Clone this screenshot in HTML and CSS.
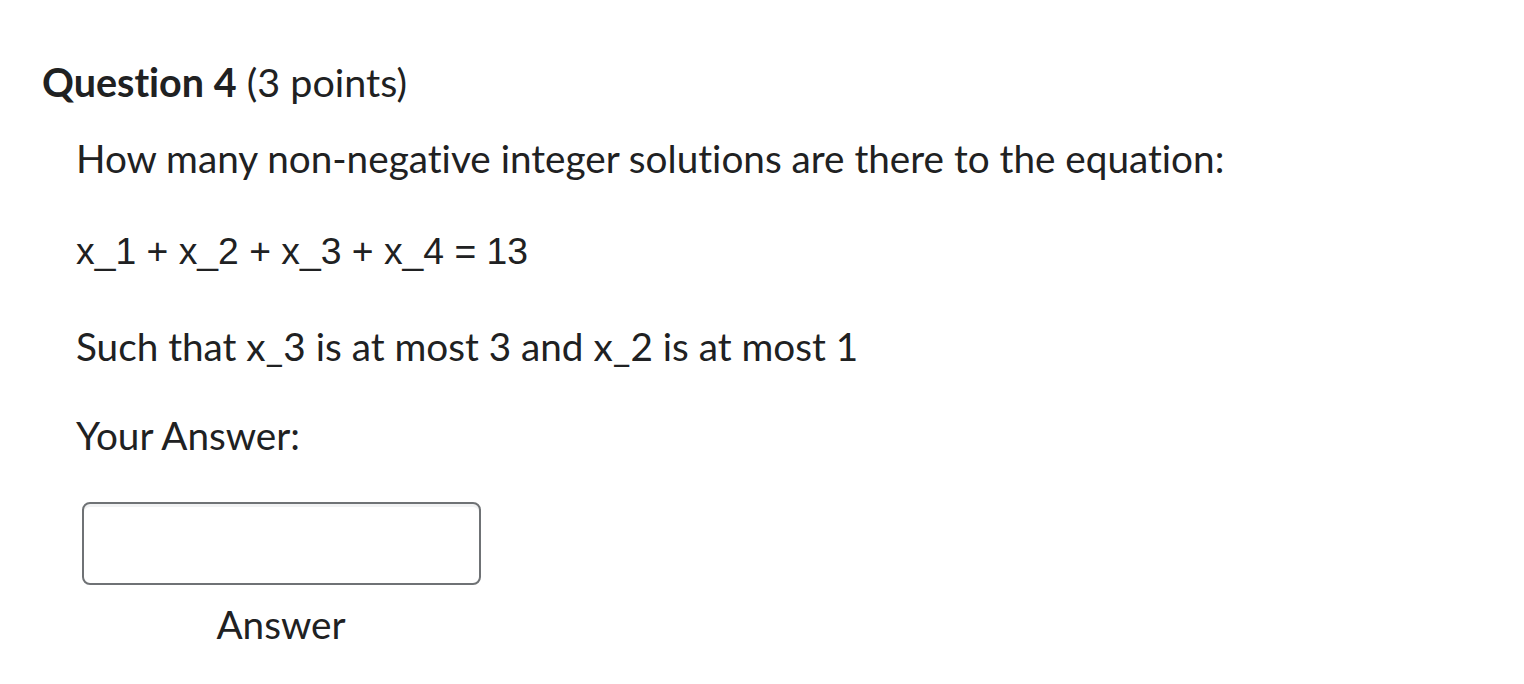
FILE: index.html
```html
<!DOCTYPE html>
<html>
<head>
<meta charset="utf-8">
<link rel="stylesheet" href="styles.css">
</head>
<body>
<div class="question">
  <h2 class="q-title"><strong>Question 4</strong> (3 points)</h2>
  <div class="q-body">
    <p class="line">How many non-negative integer solutions are there to the equation:</p>
    <p class="line eq">x_1 + x_2 + x_3 + x_4 = 13</p>
    <p class="line such">Such that x_3 is at most 3 and x_2 is at most 1</p>
    <p class="line">Your Answer:</p>
    <div class="answer">
      <input class="answer-input" type="text" aria-label="Answer">
      <div class="answer-label">Answer</div>
    </div>
  </div>
</div>
</body>
</html>
```
FILE: styles.css
```css
html, body {
  margin: 0;
  padding: 0;
  background: #ffffff;
}
body {
  font-family: Lato, "Liberation Sans", sans-serif;
  color: #202122;
  font-variant-ligatures: none;
  font-feature-settings: "liga" 0, "dlig" 0;
}
.question {
  padding: 52px 0 0 42px;
}
.q-title {
  margin: 0;
  font-size: 39.5px;
  font-weight: 400;
  line-height: 60px;
}
.q-title strong {
  font-weight: 700;
}
.q-body {
  padding-left: 34px;
}
.line {
  margin: 0;
  font-size: 38.7px;
  line-height: 93px;
}
.eq {
  font-family: "Liberation Sans", Arial, sans-serif;
  font-size: 37.3px;
}
.such {
  margin-top: 2px;
  margin-bottom: -4px;
}
.answer {
  width: 400px;
  margin-left: 5px;
  margin-top: 20px;
  display: flex;
  flex-direction: column;
  align-items: center;
}
.answer-input {
  box-sizing: border-box;
  width: 399px;
  height: 83px;
  border: 2px solid #6f7275;
  border-radius: 8px;
  box-shadow: inset 0 3px 0 #f1f2f3;
  background: #fff;
  margin: 0;
}
.answer-label {
  font-size: 38.7px;
  margin-top: 16px;
}
```
